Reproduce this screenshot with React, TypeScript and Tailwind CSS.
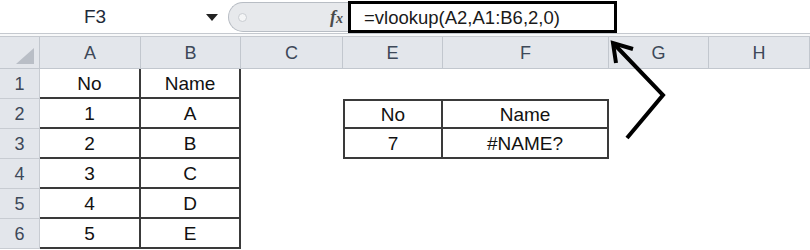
import React from 'react';

const cols = ['A', 'B', 'C', 'E', 'F', 'G', 'H'];

const sheet: Record<number, Record<string, string>> = {
    1: { A: 'No', B: 'Name' },
    2: { A: '1', B: 'A', E: 'No', F: 'Name' },
    3: { A: '2', B: 'B', E: '7', F: '#NAME?' },
    4: { A: '3', B: 'C' },
    5: { A: '4', B: 'D' },
    6: { A: '5', B: 'E' },
};

function cellBorder(row: number, col: string) {
    // A1:B6 table - top/left edges are hidden under the headers
    if (col === 'A' || col === 'B') return 'border-r-2 border-b-2 border-[#3a3a3a]';
    // E2:F3 lookup table
    if ((col === 'E' || col === 'F') && (row === 2 || row === 3)) {
        const left = col === 'E' ? ' border-l-2' : '';
        const top = row === 2 ? ' border-t-2' : '';
        return 'border-r-2 border-b-2 border-[#3a3a3a]' + left + top;
    }
    return '';
}

export default function App() {
    return (
        <div className="relative w-[810px] h-[250px] overflow-hidden bg-white font-['Liberation_Sans',Arial,sans-serif]">
            {/* Formula bar */}
            <div className="flex h-[33px] items-stretch bg-white">
                <div className="w-[190px] flex items-center justify-center pt-[1px] text-[19px] text-[#1e2a3a]">F3</div>
                <div className="w-[38px] flex items-center">
                    <div className="ml-[16px] mt-[1px] w-0 h-0 border-l-[6px] border-r-[6px] border-t-[7px] border-l-transparent border-r-transparent border-t-[#222]" />
                </div>
                <div className="w-[120px] mt-[2px] mb-[1px] flex items-center justify-between rounded-l-full border border-r-0 border-[#b8bdc4] bg-[#e7e9ec] pl-[9px] pr-[5px]">
                    <div className="w-[9px] h-[9px] rounded-full bg-[#f4f5f6] border border-[#c9cdd2]" />
                    <span className="font-['Liberation_Serif',serif] italic font-bold text-[18px] text-[#4a4a4a] leading-none">
                        f<span className="text-[14px]">x</span>
                    </span>
                </div>
                <div className="w-[269px] mt-[1px] border-[3px] border-black flex items-center pl-[13px] pt-[1px] text-[18.5px] text-[#1a1a1a]">
                    =vlookup(A2,A1:B6,2,0)
                </div>
                <div className="flex-1" />
            </div>
            <div className="h-[4px] border-y border-[#c5c9cf] bg-[#f7f8f9]" />

            {/* Sheet grid */}
            <div className="grid grid-cols-[40px_101px_100px_102px_100px_166px_100px_101px] grid-rows-[32px_repeat(6,30px)]">
                <div className="relative bg-[#e3e6eb] border-r border-b border-[#c2c7ce]">
                    <svg className="absolute right-[5px] bottom-[4px]" width="18" height="16" viewBox="0 0 18 16">
                        <polygon points="18,0 18,16 0,16" fill="#b9bec6" />
                    </svg>
                </div>
                {cols.map((c) => (
                    <div
                        key={c}
                        className="flex items-center justify-center pt-[2px] bg-[#e3e6eb] border-r border-b border-[#c2c7ce] text-[18px] text-[#3d4858]"
                    >
                        {c}
                    </div>
                ))}
                {[1, 2, 3, 4, 5, 6].map((r) => (
                    <React.Fragment key={r}>
                        <div className="flex items-center justify-center pt-[2px] bg-[#e3e6eb] border-r border-b border-[#c8ccd2] text-[18px] text-[#3d4858]">
                            {r}
                        </div>
                        {cols.map((c) => (
                            <div
                                key={c}
                                className={`flex items-center justify-center pt-[2px] text-[19px] text-[#111] ${cellBorder(r, c)}`}
                            >
                                {sheet[r][c] ?? ''}
                            </div>
                        ))}
                    </React.Fragment>
                ))}
            </div>

            {/* Arrow annotation */}
            <svg className="absolute inset-0 pointer-events-none" width="810" height="250" viewBox="0 0 810 250">
                <polyline points="627,138 663,95 614,44" fill="none" stroke="#000" strokeWidth="4" strokeLinejoin="miter" />
                <polyline points="633,49 613,43 616,63" fill="none" stroke="#000" strokeWidth="4" strokeLinejoin="miter" />
            </svg>
        </div>
    );
}
